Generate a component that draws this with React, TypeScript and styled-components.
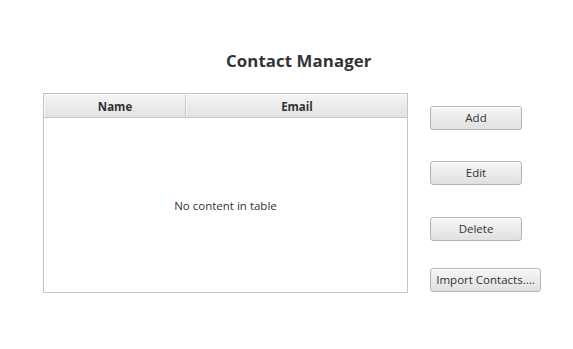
import React from "react";
import styled, { createGlobalStyle } from "styled-components";

const Global = createGlobalStyle`
  html, body { margin: 0; padding: 0; background: #ffffff; }
  body { font-family: "Open Sans", "Noto Sans", "Liberation Sans", sans-serif; color: #333333; }
`;

const Page = styled.div`
  width: 573px;
  height: 349px;
  box-sizing: border-box;
  padding: 48px 0 0 43px;
  display: flex;
  flex-direction: column;
`;

const Title = styled.h1`
  margin: 0 0 20px 0;
  padding-left: 183px;
  font-size: 16.8px;
  font-weight: 700;
  line-height: 25px;
  color: #333333;
  letter-spacing: 0.1px;
`;

const Row = styled.div`
  display: flex;
  align-items: flex-start;
  gap: 22px;
`;

const Table = styled.div`
  width: 365px;
  height: 200px;
  box-sizing: border-box;
  border: 1px solid #c4c4c4;
  display: flex;
  flex-direction: column;
  background: #ffffff;
`;

const Header = styled.div`
  display: flex;
  height: 24px;
  box-sizing: border-box;
  border-bottom: 1px solid #c8c8c8;
`;

const HeaderCell = styled.div<{ $w?: number }>`
  ${(p) => (p.$w ? `width: ${p.$w}px;` : "flex: 1;")}
  box-sizing: border-box;
  display: flex;
  align-items: center;
  justify-content: center;
  font-size: 11.5px;
  font-weight: 700;
  color: #333333;
  background: linear-gradient(to bottom, #f4f4f4, #e2e2e2);
  border-top: 1px solid #ffffff;
  border-left: 1px solid #f8f8f8;
  border-right: 1px solid #c8c8c8;
  &:last-child { border-right: none; }
`;

const Body = styled.div`
  flex: 1;
  display: flex;
  align-items: center;
  justify-content: center;
  font-size: 11.5px;
  color: #333333;
`;

const Buttons = styled.div`
  display: flex;
  flex-direction: column;
  align-items: flex-start;
  padding-top: 13px;
`;

const Button = styled.button<{ $mt?: number; $w?: number }>`
  margin-top: ${(p) => p.$mt ?? 0}px;
  width: ${(p) => p.$w ?? 92}px;
  height: 24px;
  box-sizing: border-box;
  border: 1px solid #b4b4b4;
  border-radius: 3px;
  background: linear-gradient(to bottom, #f6f6f6, #e0e0e0);
  box-shadow: inset 0 1px 0 #ffffff;
  font-family: "Open Sans", "Noto Sans", "Liberation Sans", sans-serif;
  font-size: 11.5px;
  line-height: 1;
  color: #333333;
  padding: 0 0 1px 0;
  display: flex;
  align-items: center;
  justify-content: center;
  cursor: default;
`;

export default function App() {
  return (
    <>
      <Global />
      <Page>
        <Title>Contact Manager</Title>
        <Row>
          <Table>
            <Header>
              <HeaderCell $w={142}>Name</HeaderCell>
              <HeaderCell>Email</HeaderCell>
            </Header>
            <Body>No content in table</Body>
          </Table>
          <Buttons>
            <Button>Add</Button>
            <Button $mt={31}>Edit</Button>
            <Button $mt={32}>Delete</Button>
            <Button $mt={27} $w={111}>Import Contacts....</Button>
          </Buttons>
        </Row>
      </Page>
    </>
  );
}
